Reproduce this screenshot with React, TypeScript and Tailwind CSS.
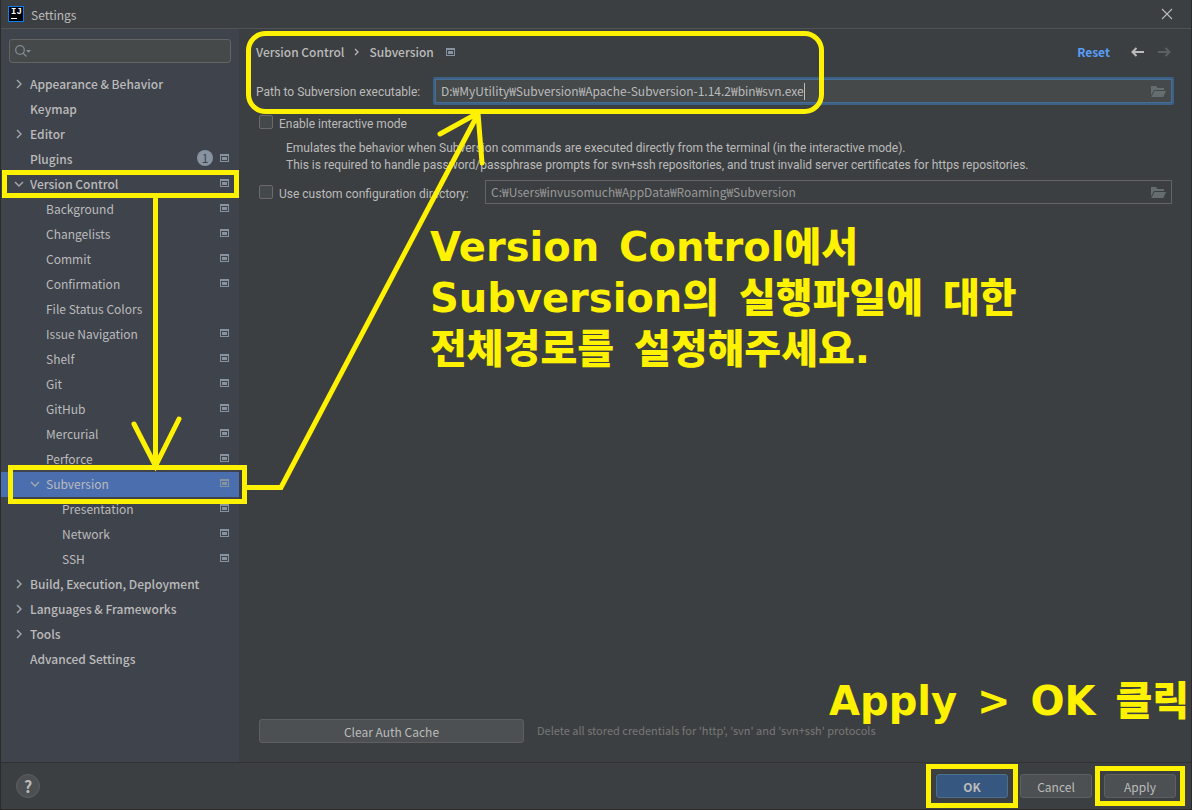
import { ReactNode } from "react";

interface TreeItem {
    label: string;
    level: 0 | 1 | 2;
    state?: "open" | "closed";
    project?: boolean;
    badge?: number;
    selected?: boolean;
}

const treeItems: TreeItem[] = [
    { label: "Appearance & Behavior", level: 0, state: "closed" },
    { label: "Keymap", level: 0 },
    { label: "Editor", level: 0, state: "closed" },
    { label: "Plugins", level: 0, project: true, badge: 1 },
    { label: "Version Control", level: 0, state: "open", project: true },
    { label: "Background", level: 1, project: true },
    { label: "Changelists", level: 1, project: true },
    { label: "Commit", level: 1, project: true },
    { label: "Confirmation", level: 1, project: true },
    { label: "File Status Colors", level: 1 },
    { label: "Issue Navigation", level: 1, project: true },
    { label: "Shelf", level: 1, project: true },
    { label: "Git", level: 1, project: true },
    { label: "GitHub", level: 1, project: true },
    { label: "Mercurial", level: 1, project: true },
    { label: "Perforce", level: 1, project: true },
    { label: "Subversion", level: 1, state: "open", project: true, selected: true },
    { label: "Presentation", level: 2, project: true },
    { label: "Network", level: 2, project: true },
    { label: "SSH", level: 2, project: true },
    { label: "Build, Execution, Deployment", level: 0, state: "closed" },
    { label: "Languages & Frameworks", level: 0, state: "closed" },
    { label: "Tools", level: 0, state: "closed" },
    { label: "Advanced Settings", level: 0 },
];

const levelPadding = {
    0: "pl-[13px] font-medium",
    1: "pl-[29px]",
    2: "pl-[45px]",
};

function ProjectIcon() {
    return (
        <svg width="9" height="8" viewBox="0 0 9 8" className="shrink-0" shapeRendering="crispEdges" aria-hidden="true">
            <path fill="#8793a0" fillRule="evenodd" d="M0 0h9v8H0zM1 2v5h7V2z" />
            <path fill="#8793a0" d="M2 3h5v3H2z" />
        </svg>
    );
}

function Chevron({ open }: { open: boolean }) {
    return (
        <svg width="10" height="10" viewBox="0 0 10 10" fill="none" stroke="#a4a8ab" strokeWidth="1.4" aria-hidden="true">
            <path d={open ? "M1 3l4 4 4-4" : "M3 1l4 4-4 4"} />
        </svg>
    );
}

function FolderIcon() {
    return (
        <svg width="15" height="11" viewBox="0 0 15 11" fill="#666d70" aria-hidden="true">
            <path d="M0 0h5l1.5 2H13v2H3L0 9.500z" />
            <path d="M3.500 5H15l-2.700 6H.300z" />
        </svg>
    );
}

function TreeRow({ item }: { item: TreeItem }) {
    return (
        <li>
            <button
                type="button"
                className={`flex h-[25px] w-full items-center pr-2.5 pb-0.5 text-left ${levelPadding[item.level]} ${item.selected ? "bg-[#4b6eaf]" : ""}`}
            >
                <span className="w-4 shrink-0">{item.state && <Chevron open={item.state === "open"} />}</span>
                <span className="flex-1 truncate">{item.label}</span>
                <span className="flex items-center gap-[7px] pb-0.5">
                    {item.badge && (
                        <span className="flex size-4 items-center justify-center rounded-full bg-[#8793a0] text-[12px] font-normal text-[#3d424b]">
                            {item.badge}
                        </span>
                    )}
                    {item.project && <ProjectIcon />}
                </span>
            </button>
        </li>
    );
}

function DialogButton({ children, primary }: { children: ReactNode; primary?: boolean }) {
    return (
        <button
            type="button"
            className={`h-6 w-[72px] rounded-[3px] border pt-0.5 ${primary ? "border-[#4c708c] bg-[#365880] font-bold" : "border-[#5e6060] bg-[#4c5052]"}`}
        >
            {children}
        </button>
    );
}

// Yellow boxes and arrows drawn over the dialog
function Markup() {
    return (
        <svg
            className="pointer-events-none absolute top-0 -left-px"
            width="830"
            height="510"
            fill="none"
            stroke="#fff200"
            strokeWidth="5"
            strokeLinecap="round"
            aria-hidden="true"
        >
            <rect x="4.500" y="172.500" width="232" height="23" />
            <rect x="10.500" y="467.500" width="234" height="34" />
            <rect x="248.500" y="33.500" width="573" height="78" rx="17" />
            <path d="M155.500 197V464M134 424l21.500 42L179 419" />
            <path d="M247 487.500h34L478 114M440 134l38-21 4 50" />
        </svg>
    );
}

function NoteLine({ text }: { text: string }) {
    return (
        <span className="block">
            {text.split(" ").map((word) => (
                <span key={word} className="mr-1.5 last:mr-0">{word} </span>
            ))}
        </span>
    );
}

export default function App() {
    return (
        <div className="relative flex min-h-screen flex-col overflow-hidden border-x border-b border-[#2b2b2b] bg-[#3c3f41] font-['Noto_Sans_CJK_KR',sans-serif] text-[12px] text-[#bbbbbb]">
            <header className="flex h-[29px] items-center border-b border-[#515354] pr-[18px] pl-[7px]">
                <div className="flex size-4 flex-col items-start border border-[#087cfa] bg-black pt-px pl-0.5 font-['Liberation_Mono',monospace] text-[9px] leading-[9px] font-bold text-white">
                    IJ
                    <span className="mt-px h-px w-1.5 bg-white" />
                </div>
                <h1 className="ml-[7px] flex-1 pt-0.5">Settings</h1>
                <button type="button" aria-label="Close">
                    <svg width="12" height="12" viewBox="0 0 12 12" stroke="#bbbbbb" strokeWidth="1.1">
                        <path d="M1 1l10 10M11 1L1 11" />
                    </svg>
                </button>
            </header>

            <div className="flex flex-1">
                <aside className="w-[238px] shrink-0 bg-[#3f434c]">
                    <div className="mx-2 mt-2.5 mb-[9px] flex h-6 items-center rounded-[3px] border border-[#646464] bg-[#45494a] pl-[5px]">
                        <svg width="17" height="13" viewBox="0 0 17 13" fill="none" stroke="#7f8b91" strokeWidth="1.300" aria-hidden="true">
                            <circle cx="5" cy="5" r="4.300" />
                            <path d="M8 8l3.500 3.500" />
                            <path d="M11 5h5l-2.500 3z" fill="#7f8b91" stroke="none" />
                        </svg>
                        <input type="text" aria-label="Search settings" className="min-w-0 flex-1 bg-transparent outline-none" />
                    </div>
                    <ul>
                        {treeItems.map((item) => (
                            <TreeRow key={item.label} item={item} />
                        ))}
                    </ul>
                </aside>

                <main className="flex min-w-0 flex-1 flex-col px-[17px] font-[Roboto,'Noto_Sans_CJK_KR',sans-serif]">
                    <div className="flex h-12 items-center pb-0.5">
                        <nav className="flex flex-1 items-center font-['Noto_Sans_CJK_KR',sans-serif] font-medium" aria-label="Breadcrumb">
                            <span>Version Control</span>
                            <svg width="5" height="8" viewBox="0 0 5 8" fill="none" stroke="#bbbbbb" strokeWidth="1.200" className="mx-2.5" aria-hidden="true">
                                <path d="M1 1l3 3-3 3" />
                            </svg>
                            <span className="mr-3">Subversion</span>
                            <ProjectIcon />
                        </nav>
                        <a href="#reset" className="mr-[21px] font-['Noto_Sans_CJK_KR',sans-serif] font-bold text-[#589df6]">Reset</a>
                        <button type="button" aria-label="Back" className="mr-3.5">
                            <svg width="13" height="10" viewBox="0 0 13 10" fill="none" stroke="#bbbbbb" strokeWidth="2">
                                <path d="M13 5H1.500M5.500 1l-4 4 4 4" />
                            </svg>
                        </button>
                        <button type="button" aria-label="Forward" disabled className="mr-[3px]">
                            <svg width="13" height="10" viewBox="0 0 13 10" fill="none" stroke="#5d6062" strokeWidth="2">
                                <path d="M0 5h11.500M7.500 1l4 4-4 4" />
                            </svg>
                        </button>
                    </div>

                    <div className="flex items-center">
                        <label htmlFor="svn-path" className="w-[177px] shrink-0 pt-0.5">Path to Subversion executable:</label>
                        <div className="flex h-7 flex-1 items-center rounded-[2px] border-2 border-[#3d6185] bg-[#45494a] px-1.5 font-['Noto_Sans_CJK_KR',sans-serif] inset-ring inset-ring-[#466d94]">
                            <div className="flex min-w-0 flex-1 items-center">
                                <input
                                    id="svn-path"
                                    type="text"
                                    defaultValue="D:₩MyUtility₩Subversion₩Apache-Subversion-1.14.2₩bin₩svn.exe"
                                    className="field-sizing-content bg-transparent outline-none"
                                />
                                <span className="h-[17px] w-px bg-[#bbbbbb]" />
                            </div>
                            <button type="button" aria-label="Browse executable"><FolderIcon /></button>
                        </div>
                    </div>

                    <label className="mt-[7px] ml-[3px] flex h-5 items-center gap-1.5">
                        <input type="checkbox" className="size-3.5 appearance-none rounded-[2px] border border-[#6b6b6b] bg-[#43494a]" />
                        <span className="pt-[3px]">Enable interactive mode</span>
                    </label>
                    <p className="mt-2 ml-[30px] leading-[17px]">
                        Emulates the behavior when Subversion commands are executed directly from the terminal (in the interactive mode).
                        <br />
                        This is required to handle password/passphrase prompts for svn+ssh repositories, and trust invalid server certificates for https repositories.
                    </p>

                    <div className="mt-1.5 mr-0.5 ml-[3px] flex items-center">
                        <label className="flex w-[226px] shrink-0 items-center gap-1.5">
                            <input type="checkbox" className="size-3.5 appearance-none rounded-[2px] border border-[#6b6b6b] bg-[#43494a]" />
                            <span className="pt-[3px]">Use custom configuration directory:</span>
                        </label>
                        <div className="flex h-6 flex-1 items-center border border-[#646464] px-[5px] font-['Noto_Sans_CJK_KR',sans-serif]">
                            <input
                                type="text"
                                aria-label="Configuration directory"
                                readOnly
                                value="C:₩Users₩invusomuch₩AppData₩Roaming₩Subversion"
                                className="min-w-0 flex-1 bg-transparent text-[#999999] outline-none"
                            />
                            <button type="button" aria-label="Browse directory"><FolderIcon /></button>
                        </div>
                    </div>

                    <div className="mt-auto mb-[19px] ml-[3px] flex items-center gap-[13px] font-['Noto_Sans_CJK_KR',sans-serif]">
                        <button type="button" className="h-6 w-[265px] rounded-[3px] border border-[#5e6060] bg-[#4c5052] pt-0.5">
                            Clear Auth Cache
                        </button>
                        <span className="pb-0.5 text-[11px] text-[#777777]">Delete all stored credentials for 'http', 'svn' and 'svn+ssh' protocols</span>
                    </div>
                </main>
            </div>

            <footer className="flex h-[47px] items-center border-t border-[#323232] px-[15px]">
                <button type="button" aria-label="Help" className="size-6 rounded-full border border-[#5e6060] bg-[#4c5052] text-[16px] leading-none font-bold">
                    ?
                </button>
                <div className="ml-auto flex gap-3">
                    <div className="relative">
                        <DialogButton primary>OK</DialogButton>
                        <span className="pointer-events-none absolute -inset-2.5 border-5 border-[#fff200]" />
                    </div>
                    <DialogButton>Cancel</DialogButton>
                    <div className="relative">
                        <DialogButton>Apply</DialogButton>
                        <span className="pointer-events-none absolute -inset-x-[9px] -inset-y-2 border-5 border-[#fff200]" />
                    </div>
                </div>
            </footer>

            <Markup />
            <p className="pointer-events-none absolute top-[222px] left-[429px] font-['DejaVu_Sans','Noto_Sans_CJK_KR',sans-serif] text-[40px] leading-[51px] font-black whitespace-nowrap text-[#fff200]">
                <NoteLine text="Version Control에서" />
                <NoteLine text="Subversion의 실행파일에 대한" />
                <NoteLine text="전체경로를 설정해주세요." />
            </p>
            <p className="pointer-events-none absolute right-0.5 bottom-[82px] font-['DejaVu_Sans','Noto_Sans_CJK_KR',sans-serif] text-[40px] leading-[51px] font-black whitespace-nowrap text-[#fff200]">
                <NoteLine text="Apply > OK 클릭" />
            </p>
        </div>
    );
}
